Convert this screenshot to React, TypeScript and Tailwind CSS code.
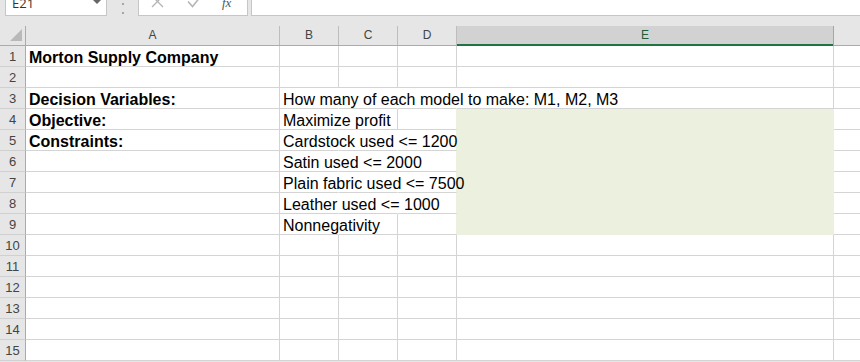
import React from "react"

type RowData = {
  a?: string
  b?: string
  // cells (B, C, D) whose right gridline is covered by spilled text
  hide?: string[]
  shaded?: boolean
}

const rows: RowData[] = [
  { a: "Morton Supply Company" },
  {},
  { a: "Decision Variables:", b: "How many of each model to make: M1, M2, M3", hide: ["b", "c", "d"] },
  { a: "Objective:", b: "Maximize profit", hide: ["b"], shaded: true },
  { a: "Constraints:", b: "Cardstock used <= 1200", hide: ["b", "c"], shaded: true },
  { b: "Satin used <= 2000", hide: ["b", "c"], shaded: true },
  { b: "Plain fabric used <= 7500", hide: ["b", "c"], shaded: true },
  { b: "Leather used <= 1000", hide: ["b", "c"], shaded: true },
  { b: "Nonnegativity", hide: ["b"], shaded: true },
  {},
  {},
  {},
  {},
  {},
  {},
]

const grid = "border-[#d4d4d4]"
const shade = "bg-[#ebf1de]"

function Toolbar() {
  return (
    <div className="flex h-[16px] items-stretch pl-[5px]">
      <div className="relative flex w-[102px] items-start overflow-hidden border-x border-b border-[#c6c6c6] bg-white">
        <span className="-mt-[3px] pl-[6px] text-[13px] leading-[13px] text-[#333] font-['Open_Sans',sans-serif]">E21</span>
        <div className="ml-auto mr-[5px] mt-0 h-0 w-0 border-x-[4px] border-t-[4px] border-x-transparent border-t-[#666]" />
      </div>
      <div className="flex w-[31px] flex-col items-center gap-[7px] pt-[3px]">
        <div className="h-[2px] w-[2px] bg-[#a6a6a6]" />
        <div className="h-[2px] w-[2px] bg-[#a6a6a6]" />
      </div>
      <div className="relative flex w-[110px] items-start overflow-hidden border-x border-b border-[#c6c6c6] bg-white">
        <svg width="13" height="13" viewBox="0 0 13 13" className="-mt-[5px] ml-[12px]">
          <path d="M1 1 L12 12 M12 1 L1 12" stroke="#b4b4b4" strokeWidth="1.3" fill="none" />
        </svg>
        <svg width="15" height="13" viewBox="0 0 15 13" className="-mt-[5px] ml-[23px]">
          <path d="M1 6.5 L5.5 11.5 L14 1" stroke="#b4b4b4" strokeWidth="1.5" fill="none" />
        </svg>
        <span className="-mt-[4px] ml-[20px] font-['Liberation_Serif',serif] text-[13px] italic leading-[13px] text-[#555]">
          fx
        </span>
      </div>
      <div className="ml-[3px] flex-1 border-b border-l border-[#c6c6c6] bg-white" />
    </div>
  )
}

function HeaderRow() {
  const col = "flex justify-center border-r border-[#bdbdbd] text-[12px] leading-[19px] text-[#444]"
  return (
    <div className="flex h-[20px] border-b border-[#ababab]">
      <div className="relative w-[26px] border-r border-[#ababab]">
        <div className="absolute left-[10px] top-[3px] h-0 w-0 border-b-[12px] border-l-[12px] border-b-[#b9b9b9] border-l-transparent" />
      </div>
      <div className={`${col} w-[254px]`}>A</div>
      <div className={`${col} w-[59px]`}>B</div>
      <div className={`${col} w-[59px]`}>C</div>
      <div className={`${col} w-[59px]`}>D</div>
      <div className="relative flex w-[377px] justify-center border-r border-[#a6a6a6] bg-[#d2d2d2] text-[12px] leading-[19px] text-[#1f5c38]">
        E
        <div className="absolute -bottom-px left-0 right-0 h-[2px] bg-[#217346]" />
      </div>
      <div className="flex-1" />
    </div>
  )
}

function SheetRow({ n, r }: { n: number; r: RowData }) {
  const hide = r.hide ?? []
  const right = (key: string, next?: boolean) => {
    if (next) return "border-r-[#ebf1de]"
    return hide.includes(key) ? "border-r-white" : ""
  }
  return (
    <div className="flex h-[21px]">
      <div className="w-[26px] border-b border-r border-b-[#d0d0d0] border-r-[#ababab] bg-[#e6e6e6] text-center text-[13px] leading-[21px] text-[#444]">
        {n}
      </div>
      <div className={`w-[254px] border-b border-r ${grid} pl-[3px]`}>
        {r.a && (
          <span className="relative z-10 whitespace-nowrap text-[16px] font-bold leading-[18px] text-black">{r.a}</span>
        )}
      </div>
      <div className={`w-[59px] border-b border-r ${grid} ${right("b")} pl-[3px]`}>
        {r.b && <span className="relative z-10 whitespace-nowrap text-[16px] leading-[18px] text-black">{r.b}</span>}
      </div>
      <div className={`w-[59px] border-b border-r ${grid} ${right("c")}`} />
      <div className={`w-[59px] border-b border-r ${grid} ${right("d", r.shaded)}`} />
      <div
        className={`w-[377px] border-b border-r ${grid} ${
          r.shaded ? `${shade} border-b-[#ebf1de] border-r-[#ebf1de]` : ""
        }`}
      />
      <div className={`flex-1 border-b ${grid}`} />
    </div>
  )
}

export default function App() {
  return (
    <div className="h-[362px] w-[860px] overflow-hidden bg-[#e6e6e6] font-['Liberation_Sans',Arial,sans-serif]">
      <Toolbar />
      <div className="h-[10px]" />
      <HeaderRow />
      <div className="bg-white">
        {rows.map((r, i) => (
          <SheetRow key={i} n={i + 1} r={r} />
        ))}
      </div>
    </div>
  )
}
